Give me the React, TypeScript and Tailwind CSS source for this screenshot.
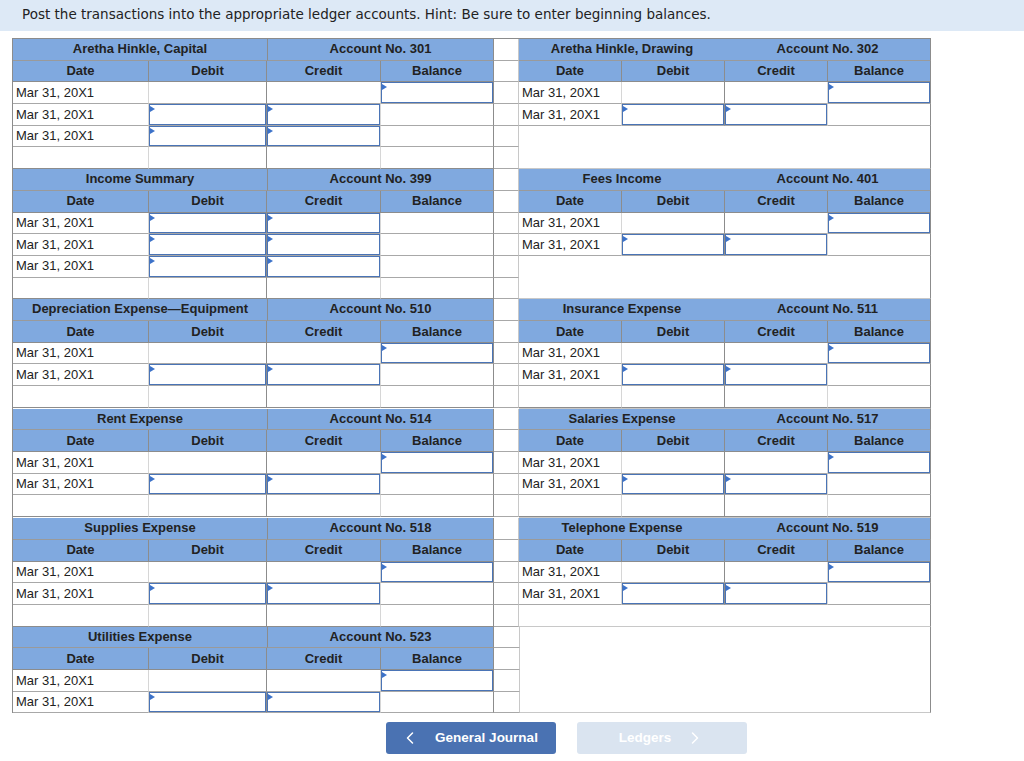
import { ChevronLeft, ChevronRight } from 'lucide-react';

type Row = { debit?: boolean; credit?: boolean; balance?: boolean };

interface Account {
  name: string;
  no: number;
  rows: Row[];
}

interface Band {
  left: Account;
  right?: Account;
  spacer: boolean;
}

const B: Row = { balance: true };
const DC: Row = { debit: true, credit: true };

const bands: Band[] = [
  {
    left: { name: 'Aretha Hinkle, Capital', no: 301, rows: [B, DC, DC] },
    right: { name: 'Aretha Hinkle, Drawing', no: 302, rows: [B, DC] },
    spacer: true,
  },
  {
    left: { name: 'Income Summary', no: 399, rows: [DC, DC, DC] },
    right: { name: 'Fees Income', no: 401, rows: [B, DC] },
    spacer: true,
  },
  {
    left: { name: 'Depreciation Expense\u2014Equipment', no: 510, rows: [B, DC] },
    right: { name: 'Insurance Expense', no: 511, rows: [B, DC] },
    spacer: true,
  },
  {
    left: { name: 'Rent Expense', no: 514, rows: [B, DC] },
    right: { name: 'Salaries Expense', no: 517, rows: [B, DC] },
    spacer: true,
  },
  {
    left: { name: 'Supplies Expense', no: 518, rows: [B, DC] },
    right: { name: 'Telephone Expense', no: 519, rows: [B, DC] },
    spacer: true,
  },
  {
    left: { name: 'Utilities Expense', no: 523, rows: [B, DC] },
    spacer: false,
  },
];

function InputBox() {
  return (
    <div className="relative h-full w-full border border-[#4a74b6] bg-white">
      <span className="absolute left-0 top-[1px] h-0 w-0 border-y-[3px] border-l-[5px] border-y-transparent border-l-[#3c72c9]" />
    </div>
  );
}

// one ledger table; widths differ between the left and right halves
function Ledger({ account, side, spacer }: { account: Account; side: 'left' | 'right'; spacer: boolean }) {
  const left = side === 'left';
  const w = left
    ? ['w-[136px]', 'w-[118px]', 'w-[114px]', 'w-[113px]']
    : ['w-[103px]', 'w-[103px]', 'w-[103px]', 'w-[103px]'];
  const half = left ? ['w-[254px]', 'w-[227px]'] : ['w-[206px]', 'w-[206px]'];

  return (
    <div className="flex flex-col">
      <div className="flex h-[21.7px] bg-[#80a9df] font-bold">
        <div className={`${half[0]} flex items-center justify-center border-b border-b-[#9a9a9a] pb-[1px]`}>{account.name}</div>
        <div className={`${half[1]} flex items-center justify-center border-r border-b border-r-[#8c8c8c] border-b-[#9a9a9a] pb-[1px] ${left ? 'border-l border-l-[#8c8c8c]' : ''}`}>
          Account No. {account.no}
        </div>
      </div>
      <div className="flex h-[21.7px] bg-[#80a9df] font-bold">
        {['Date', 'Debit', 'Credit', 'Balance'].map((h, i) => (
          <div
            key={h}
            className={`${w[i]} flex items-center justify-center border-r border-b border-[#8c8c8c]`}
          >
            {h}
          </div>
        ))}
      </div>
      {account.rows.map((r, i) => (
        <div key={i} className="flex h-[21.7px] bg-white">
          <div className={`${w[0]} flex items-center border-r border-b border-r-[#d6d6d6] border-b-[#a8a8a8] pl-[3px]`}>
            Mar 31, 20X1
          </div>
          <div className={`${w[1]} border-r border-b border-r-[#8c8c8c] border-b-[#a8a8a8]`}>{r.debit && <InputBox />}</div>
          <div className={`${w[2]} border-r border-b border-r-[#d6d6d6] border-b-[#a8a8a8]`}>{r.credit && <InputBox />}</div>
          <div className={`${w[3]} border-r border-b border-r-[#8c8c8c] border-b-[#a8a8a8]`}>{r.balance && <InputBox />}</div>
        </div>
      ))}
      {spacer && (
        <div className="flex h-[21.7px] bg-white">
          <div className={`${w[0]} border-r border-b border-r-[#d6d6d6] border-b-[#8c8c8c]`} />
          <div className={`${w[1]} border-r border-b border-r-[#8c8c8c] border-b-[#8c8c8c]`} />
          <div className={`${w[2]} border-r border-b border-r-[#d6d6d6] border-b-[#8c8c8c]`} />
          <div className={`${w[3]} border-r border-b border-r-[#8c8c8c] border-b-[#8c8c8c]`} />
        </div>
      )}
    </div>
  );
}

function BandRow({ band }: { band: Band }) {
  const rowCount = 2 + band.left.rows.length + (band.spacer ? 1 : 0);
  return (
    <div className="flex">
      <Ledger account={band.left} side="left" spacer={band.spacer} />
      <div className="flex w-[26px] flex-col">
        {Array.from({ length: rowCount }).map((_, i) => (
          <div key={i} className="h-[21.7px] border-r border-b border-r-[#c8c8c8] border-b-[#a8a8a8]" />
        ))}
      </div>
      <div className="flex w-[412px] flex-col">
        {band.right && (
          <Ledger
            account={band.right}
            side="right"
            spacer={band.right.rows.length + 3 === rowCount && band.right.name !== 'Telephone Expense'}
          />
        )}
        <div className="flex-1 border-r border-b border-r-[#8c8c8c] border-b-[#c8c8c8]" />
      </div>
    </div>
  );
}

export default function App() {
  return (
    <div className="min-h-[761px] bg-white font-[family-name:'Liberation_Sans',Arial,sans-serif] text-[13px] text-[#222]">
      <div className="flex h-[31px] items-center bg-[#dde9f6] pb-[2px] pl-[22px] font-[family-name:'DejaVu_Sans',Verdana,sans-serif] text-[13.5px] text-[#222]">
        Post the transactions into the appropriate ledger accounts. Hint: Be sure to enter beginning balances.
      </div>

      <div className="ml-[12px] mt-[7px] w-[919px] border-t border-l border-[#8c8c8c]">
        {bands.map((b) => (
          <BandRow key={b.left.no} band={b} />
        ))}
      </div>

      <div className="mt-[9px] flex justify-center gap-[21px] pl-[109px]">
        <button className="flex h-[32px] w-[170px] items-center justify-center gap-[15px] rounded-[3px] bg-[#4a72b2] pr-[4px] text-[13.5px] font-bold text-white">
          <ChevronLeft size={20} strokeWidth={1.8} />
          General Journal
        </button>
        <button className="flex h-[32px] w-[170px] items-center justify-center gap-[14px] rounded-[3px] bg-[#dae4f0] text-[13.5px] font-bold text-white">
          Ledgers
          <ChevronRight size={20} strokeWidth={1.8} />
        </button>
      </div>
    </div>
  );
}
